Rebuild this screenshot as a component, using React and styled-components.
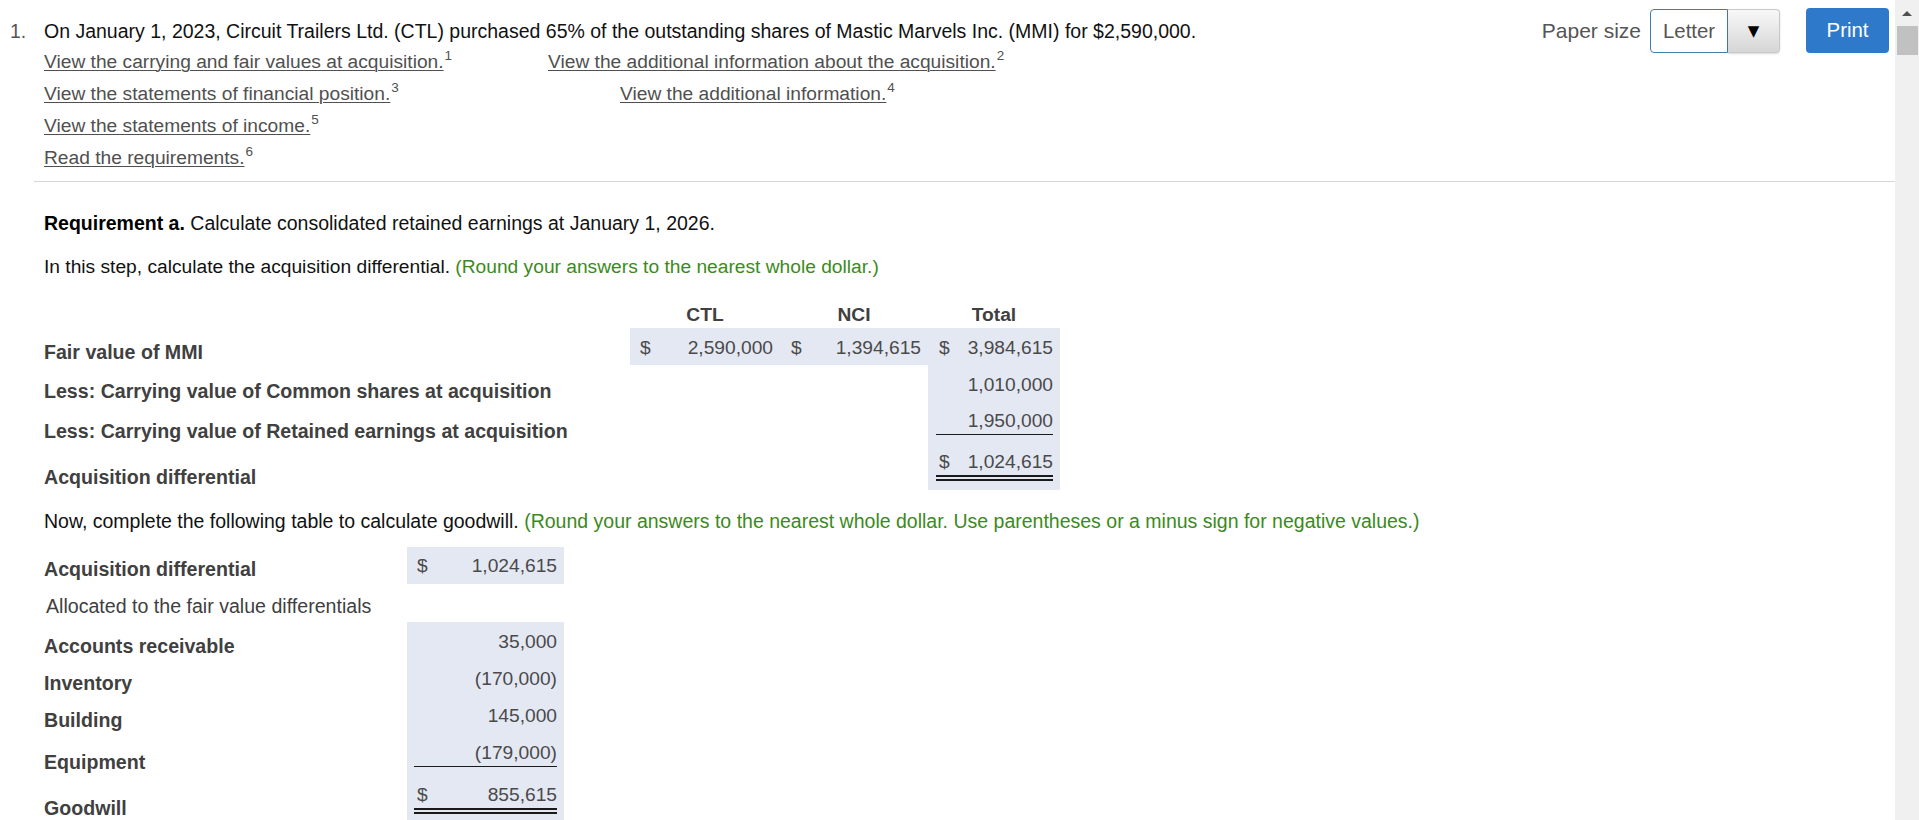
import React from 'react';
import styled, { createGlobalStyle } from 'styled-components';

const Global = createGlobalStyle`
  html, body { margin: 0; padding: 0; background: #fff; overflow: hidden; }
  body { font-family: "Liberation Sans", Arial, sans-serif; font-size: 19.2px; color: #111; }
  * { box-sizing: border-box; }
`;

const SHADE = '#e4e8f3';

const Page = styled.div`
  display: flex;
  width: 1919px;
  height: 820px;
  overflow: hidden;
`;

const Main = styled.main`
  flex: 1;
  min-width: 0;
`;

const Scrollbar = styled.aside`
  width: 24px;
  flex: none;
  background: #f0f0f0;
  display: flex;
  flex-direction: column;
  align-items: center;
`;

const ScrollArrow = styled.div`
  margin-top: 11px;
  width: 0;
  height: 0;
  border-left: 5px solid transparent;
  border-right: 5px solid transparent;
  border-bottom: 5px solid #505050;
`;

const ScrollThumb = styled.div`
  margin-top: 10px;
  width: 21px;
  height: 29px;
  background: #c1c1c1;
`;

const Header = styled.div`
  display: flex;
  justify-content: space-between;
  align-items: flex-start;
`;

const Question = styled.div`
  display: flex;
  padding-top: 17px;
`;

const Num = styled.span`
  width: 44px;
  padding-left: 10px;
  color: #555;
  line-height: 28px;
  font-size: 19.5px;
`;

const QBody = styled.div`
  display: flex;
  flex-direction: column;
`;

const Sentence = styled.div`
  line-height: 28px;
  font-size: 19.5px;
  color: #111;
`;

const Links = styled.div`
  display: grid;
  grid-template-columns: 460px auto;
  grid-auto-rows: 32px;
  align-items: center;
  padding-top: 1px;
`;

const LinkCell = styled.div`
  padding-left: ${p => p.$offset || 0}px;
  white-space: nowrap;
`;

const Link = styled.a`
  color: #505050;
  text-decoration: underline;
  text-decoration-thickness: 1px;
  text-underline-offset: 2px;
  cursor: pointer;
`;

const Sup = styled.span`
  position: relative;
  top: -0.6em;
  margin-left: 1px;
  font-size: 13.5px;
  color: #505050;
`;

const Toolbar = styled.div`
  display: flex;
  align-items: center;
  margin-top: 9px;
  margin-right: 6px;
  font-size: 20.4px;
`;

const ToolLabel = styled.span`
  color: #555;
  font-size: 21px;
  margin-right: 9px;
`;

const Select = styled.div`
  display: flex;
  height: 44px;
  margin-right: 26px;
`;

const SelectValue = styled.div`
  width: 78px;
  display: flex;
  align-items: center;
  padding-left: 12px;
  color: #555;
  background: #fff;
  border: 1px solid #3f7fa6;
  border-radius: 4px 0 0 4px;
`;

const SelectButton = styled.div`
  width: 52px;
  display: flex;
  align-items: center;
  justify-content: center;
  background: linear-gradient(#f8f8f8, #d6d6d6);
  border: 1px solid #c8c8c8;
  border-left: none;
  border-radius: 0 4px 4px 0;
  box-shadow: 0 1px 2px rgba(0, 0, 0, 0.15);
  font-family: "DejaVu Sans", sans-serif;
  font-size: 15px;
  color: #000;
`;

const PrintButton = styled.button`
  width: 83px;
  height: 45px;
  margin-top: -1px;
  border: none;
  border-radius: 4px;
  background: #2e79ca;
  color: #fff;
  font-family: "Liberation Sans", Arial, sans-serif;
  font-size: 20.4px;
  padding: 0;
`;

const Rule = styled.hr`
  margin: 7px 0 0 34px;
  border: none;
  border-top: 1px solid #d5d5e2;
  height: 0;
`;

const Section = styled.section`
  padding-left: 44px;
`;

const Para = styled.p`
  margin: ${p => p.$mt}px 0 0;
  line-height: 32px;
  font-size: ${p => p.$size || 19.5}px;
  color: #111;
`;

const Bold = styled.b`
  font-weight: bold;
  color: #000;
`;

const Hint = styled.span`
  color: #3b8a1c;
`;

const Table = styled.div`
  margin-top: ${p => p.$mt}px;
  display: flex;
  flex-direction: column;
`;

const TRow = styled.div`
  display: flex;
  height: ${p => p.$h}px;
`;

const Label = styled.div`
  width: ${p => p.$w}px;
  flex: none;
  align-self: flex-end;
  padding-bottom: ${p => p.$pb ?? 2}px;
  padding-left: ${p => p.$indent || 0}px;
  line-height: 22px;
  font-size: 19.6px;
  font-weight: ${p => (p.$plain ? 'normal' : 'bold')};
  color: #404040;
  white-space: nowrap;
`;

const HeadCell = styled.div`
  width: ${p => p.$w}px;
  flex: none;
  text-align: center;
  line-height: 27px;
  font-weight: bold;
  color: #404040;
`;

const Cell = styled.div`
  width: ${p => p.$w}px;
  flex: none;
  display: flex;
  align-items: center;
  padding: 0 7px 0 ${p => p.$pl ?? 8}px;
  background: ${p => (p.$shade ? SHADE : 'transparent')};
`;

const Amount = styled.div`
  flex: 1;
  display: flex;
  justify-content: space-between;
  line-height: 22px;
  color: #4a4a4a;
  padding: ${p => (p.$line ? '0 0 2px' : `${p.$lift ? 0 : 2}px 0 0`)};
  border-bottom: ${p =>
    p.$line === 'single' ? '1px solid #1a1a1a' : p.$line === 'double' ? '6px double #1a1a1a' : 'none'};
`;

const Dollar = styled.span`
  padding-left: 3px;
`;

function Money({ dollar, value, line, lift }) {
  return (
    <Amount $line={line} $lift={lift}>
      <Dollar>{dollar ? '$' : ''}</Dollar>
      <span>{value}</span>
    </Amount>
  );
}

const W1 = { label: 586, ctl: 150, nci: 148, total: 132 };
const W2 = { label: 363, value: 157 };

export default function App() {
  return (
    <Page>
      <Global />
      <Main>
        <Header>
          <Question>
            <Num>1.</Num>
            <QBody>
              <Sentence>
                On January 1, 2023, Circuit Trailers Ltd. (CTL) purchased 65% of the outstanding shares of Mastic Marvels Inc. (MMI) for $2,590,000.
              </Sentence>
              <Links>
                <LinkCell>
                  <Link>View the carrying and fair values at acquisition.</Link>
                  <Sup>1</Sup>
                </LinkCell>
                <LinkCell $offset={44}>
                  <Link>View the additional information about the acquisition.</Link>
                  <Sup>2</Sup>
                </LinkCell>
                <LinkCell>
                  <Link>View the statements of financial position.</Link>
                  <Sup>3</Sup>
                </LinkCell>
                <LinkCell $offset={116}>
                  <Link>View the additional information.</Link>
                  <Sup>4</Sup>
                </LinkCell>
                <LinkCell>
                  <Link>View the statements of income.</Link>
                  <Sup>5</Sup>
                </LinkCell>
                <LinkCell />
                <LinkCell>
                  <Link>Read the requirements.</Link>
                  <Sup>6</Sup>
                </LinkCell>
                <LinkCell />
              </Links>
            </QBody>
          </Question>
          <Toolbar>
            <ToolLabel>Paper size</ToolLabel>
            <Select>
              <SelectValue>Letter</SelectValue>
              <SelectButton>▼</SelectButton>
            </Select>
            <PrintButton>Print</PrintButton>
          </Toolbar>
        </Header>

        <Rule />

        <Section>
          <Para $mt={25}>
            <Bold>Requirement a.</Bold> Calculate consolidated retained earnings at January 1, 2026.
          </Para>
          <Para $mt={12} $size={19.2}>
            In this step, calculate the acquisition differential. <Hint>(Round your answers to the nearest whole dollar.)</Hint>
          </Para>

          <Table $mt={18}>
            <TRow $h={27}>
              <Label $w={W1.label} />
              <HeadCell $w={W1.ctl}>CTL</HeadCell>
              <HeadCell $w={W1.nci}>NCI</HeadCell>
              <HeadCell $w={W1.total}>Total</HeadCell>
            </TRow>
            <TRow $h={37}>
              <Label $w={W1.label}>Fair value of MMI</Label>
              <Cell $w={W1.ctl} $pl={7} $shade><Money dollar value="2,590,000" /></Cell>
              <Cell $w={W1.nci} $pl={8} $shade><Money dollar value="1,394,615" /></Cell>
              <Cell $w={W1.total} $shade><Money dollar value="3,984,615" /></Cell>
            </TRow>
            <TRow $h={38}>
              <Label $w={W1.label} $pb={1}>Less: Carrying value of Common shares at acquisition</Label>
              <Cell $w={W1.ctl} />
              <Cell $w={W1.nci} />
              <Cell $w={W1.total} $shade><Money value="1,010,000" /></Cell>
            </TRow>
            <TRow $h={39}>
              <Label $w={W1.label} $pb={0}>Less: Carrying value of Retained earnings at acquisition</Label>
              <Cell $w={W1.ctl} />
              <Cell $w={W1.nci} />
              <Cell $w={W1.total} $shade><Money value="1,950,000" line="single" /></Cell>
            </TRow>
            <TRow $h={48}>
              <Label $w={W1.label}>Acquisition differential</Label>
              <Cell $w={W1.ctl} />
              <Cell $w={W1.nci} />
              <Cell $w={W1.total} $shade><Money dollar value="1,024,615" line="double" /></Cell>
            </TRow>
          </Table>

          <Para $mt={15}>
            Now, complete the following table to calculate goodwill.{' '}
            <Hint>(Round your answers to the nearest whole dollar. Use parentheses or a minus sign for negative values.)</Hint>
          </Para>

          <Table $mt={10}>
            <TRow $h={37}>
              <Label $w={W2.label} $pb={4}>Acquisition differential</Label>
              <Cell $w={W2.value} $pl={7} $shade><Money dollar lift value="1,024,615" /></Cell>
            </TRow>
            <TRow $h={38}>
              <Label $w={W2.label} $pb={5} $indent={2} $plain>Allocated to the fair value differentials</Label>
              <Cell $w={W2.value} />
            </TRow>
            <TRow $h={37}>
              <Label $w={W2.label}>Accounts receivable</Label>
              <Cell $w={W2.value} $pl={7} $shade><Money value="35,000" /></Cell>
            </TRow>
            <TRow $h={37}>
              <Label $w={W2.label}>Inventory</Label>
              <Cell $w={W2.value} $pl={7} $shade><Money value="(170,000)" /></Cell>
            </TRow>
            <TRow $h={37}>
              <Label $w={W2.label}>Building</Label>
              <Cell $w={W2.value} $pl={7} $shade><Money value="145,000" /></Cell>
            </TRow>
            <TRow $h={42}>
              <Label $w={W2.label} $pb={2}>Equipment</Label>
              <Cell $w={W2.value} $pl={7} $shade><Money value="(179,000)" line="single" /></Cell>
            </TRow>
            <TRow $h={48}>
              <Label $w={W2.label} $pb={4}>Goodwill</Label>
              <Cell $w={W2.value} $pl={7} $shade><Money dollar value="855,615" line="double" /></Cell>
            </TRow>
          </Table>
        </Section>
      </Main>
      <Scrollbar>
        <ScrollArrow />
        <ScrollThumb />
      </Scrollbar>
    </Page>
  );
}
